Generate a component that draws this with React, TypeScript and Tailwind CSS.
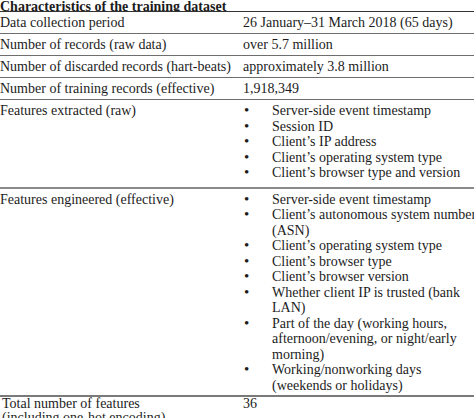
import React from "react";

const extracted: string[][] = [
  ["Server-side event timestamp"],
  ["Session ID"],
  ["Client’s IP address"],
  ["Client’s operating system type"],
  ["Client’s browser type and version"],
];

const engineered: string[][] = [
  ["Server-side event timestamp"],
  ["Client’s autonomous system number", "(ASN)"],
  ["Client’s operating system type"],
  ["Client’s browser type"],
  ["Client’s browser version"],
  ["Whether client IP is trusted (bank", "LAN)"],
  ["Part of the day (working hours,", "afternoon/evening, or night/early", "morning)"],
  ["Working/nonworking days", "(weekends or holidays)"],
];

function Bullets({ items }: { items: string[][] }) {
  return (
    <ul className="flex flex-col">
      {items.map((lines, i) => (
        <li key={i} className="flex">
          <span className="w-[29px] shrink-0 pl-[1px] text-[15px] leading-[15.5px]">•</span>
          <span className="flex flex-col whitespace-nowrap">
            {lines.map((l, j) => (
              <span key={j}>{l}</span>
            ))}
          </span>
        </li>
      ))}
    </ul>
  );
}

function Row({
  left,
  right,
  border = "border-b border-[#6e6e6e]",
  pb = "pb-[2.5px]",
  pt = "pt-[3px]",
}: {
  left: React.ReactNode;
  right: React.ReactNode;
  border?: string;
  pb?: string;
  pt?: string;
}) {
  return (
    <div className={`grid grid-cols-[243px_1fr] ${pt} ${pb} ${border}`}>
      <div className="whitespace-nowrap">{left}</div>
      <div>{right}</div>
    </div>
  );
}

export default function App() {
  return (
    <div
      className="w-[474px] h-[418px] overflow-hidden bg-white text-[14px] leading-[15.5px] text-[#1c1c1c]"
      style={{ fontFamily: '"Liberation Serif", "DejaVu Serif", serif' }}
    >
      <div className="h-[11px] overflow-hidden flex items-end">
        <div className="font-bold leading-[15px] whitespace-nowrap -mb-[3px]">
          Characteristics of the training dataset
        </div>
      </div>
      <div className="border-t border-[#333]" />
      <Row left="Data collection period" right="26 January–31 March 2018 (65 days)" />
      <Row left="Number of records (raw data)" right="over 5.7 million" />
      <Row left="Number of discarded records (hart-beats)" right="approximately 3.8 million" />
      <Row left="Number of training records (effective)" right="1,918,349" />
      <Row
        left="Features extracted (raw)"
        right={<Bullets items={extracted} />}
        border="border-b-2 border-[#8a8a8a]"
        pb="pb-[6px]"
      />
      <Row
        left="Features engineered (effective)"
        right={<Bullets items={engineered} />}
        border="border-b-2 border-[#7a7a7a]"
        pb="pb-[2px]"
      />
      <Row
        left={
          <div className="flex flex-col pl-[2px] leading-[14px]">
            <span>Total number of features</span>
            <span>(including one-hot encoding)</span>
          </div>
        }
        right={<div className="leading-[14px]">36</div>}
        border=""
        pt="pt-0"
      />
    </div>
  );
}
